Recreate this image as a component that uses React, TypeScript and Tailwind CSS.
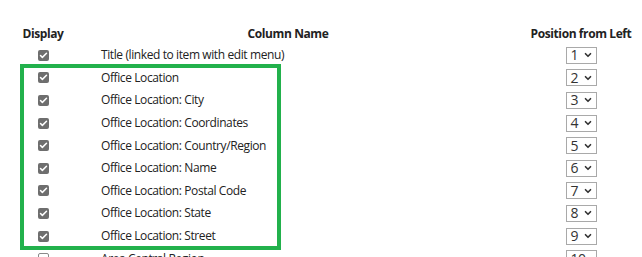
import { Check, ChevronDown } from "lucide-react";

type Row = { name: string; on: boolean };

const rows: Row[] = [
  { name: "Title (linked to item with edit menu)", on: true },
  { name: "Office Location", on: true },
  { name: "Office Location: City", on: true },
  { name: "Office Location: Coordinates", on: true },
  { name: "Office Location: Country/Region", on: true },
  { name: "Office Location: Name", on: true },
  { name: "Office Location: Postal Code", on: true },
  { name: "Office Location: State", on: true },
  { name: "Office Location: Street", on: true },
  { name: "Area Central Region", on: false },
];

function Box({ on }: { on: boolean }) {
  if (!on) {
    return <div className="w-[11px] h-[11px] rounded-[2px] border border-[#8a8a8a] bg-white" />;
  }
  return (
    <div className="w-[11px] h-[11px] rounded-[2px] bg-[#6e6e6e] flex items-center justify-center">
      <Check size={9} strokeWidth={4} className="text-white" />
    </div>
  );
}

function Position({ n }: { n: number }) {
  return (
    <div className="w-[31px] h-[17px] border border-[#a9a9a9] bg-white flex items-center justify-between pl-[4px] pr-[3px]">
      <span className="text-[14px] leading-none text-[#333]">{n}</span>
      <ChevronDown size={10} strokeWidth={4} className="text-[#333]" />
    </div>
  );
}

export default function App() {
  return (
    <div
      className="relative w-[642px] h-[257px] overflow-hidden bg-white pt-[24px] pl-[18px] text-[#222] tracking-[-0.4px]"
      style={{ fontFamily: '"Segoe UI", "Open Sans", sans-serif' }}
    >
      <div className="flex h-[20px] items-center text-[12px] font-bold">
        <div className="w-[50px] text-center">Display</div>
        <div className="w-[452px] pl-[33px] pr-[45px] text-center">Column Name</div>
        <div className="w-[122px] text-center">Position from Left</div>
      </div>
      {rows.map((r, i) => (
        <div key={r.name} className="flex h-[22.6px] items-center text-[12px]">
          <div className="w-[50px] flex justify-center">
            <Box on={r.on} />
          </div>
          <div className="w-[452px] pl-[33px] whitespace-nowrap">{r.name}</div>
          <div className="w-[122px] flex justify-center">
            <Position n={i + 1} />
          </div>
        </div>
      ))}
      <div className="absolute left-[20px] top-[64px] w-[261px] h-[186px] border-4 border-[#22b14c]" />
    </div>
  );
}
